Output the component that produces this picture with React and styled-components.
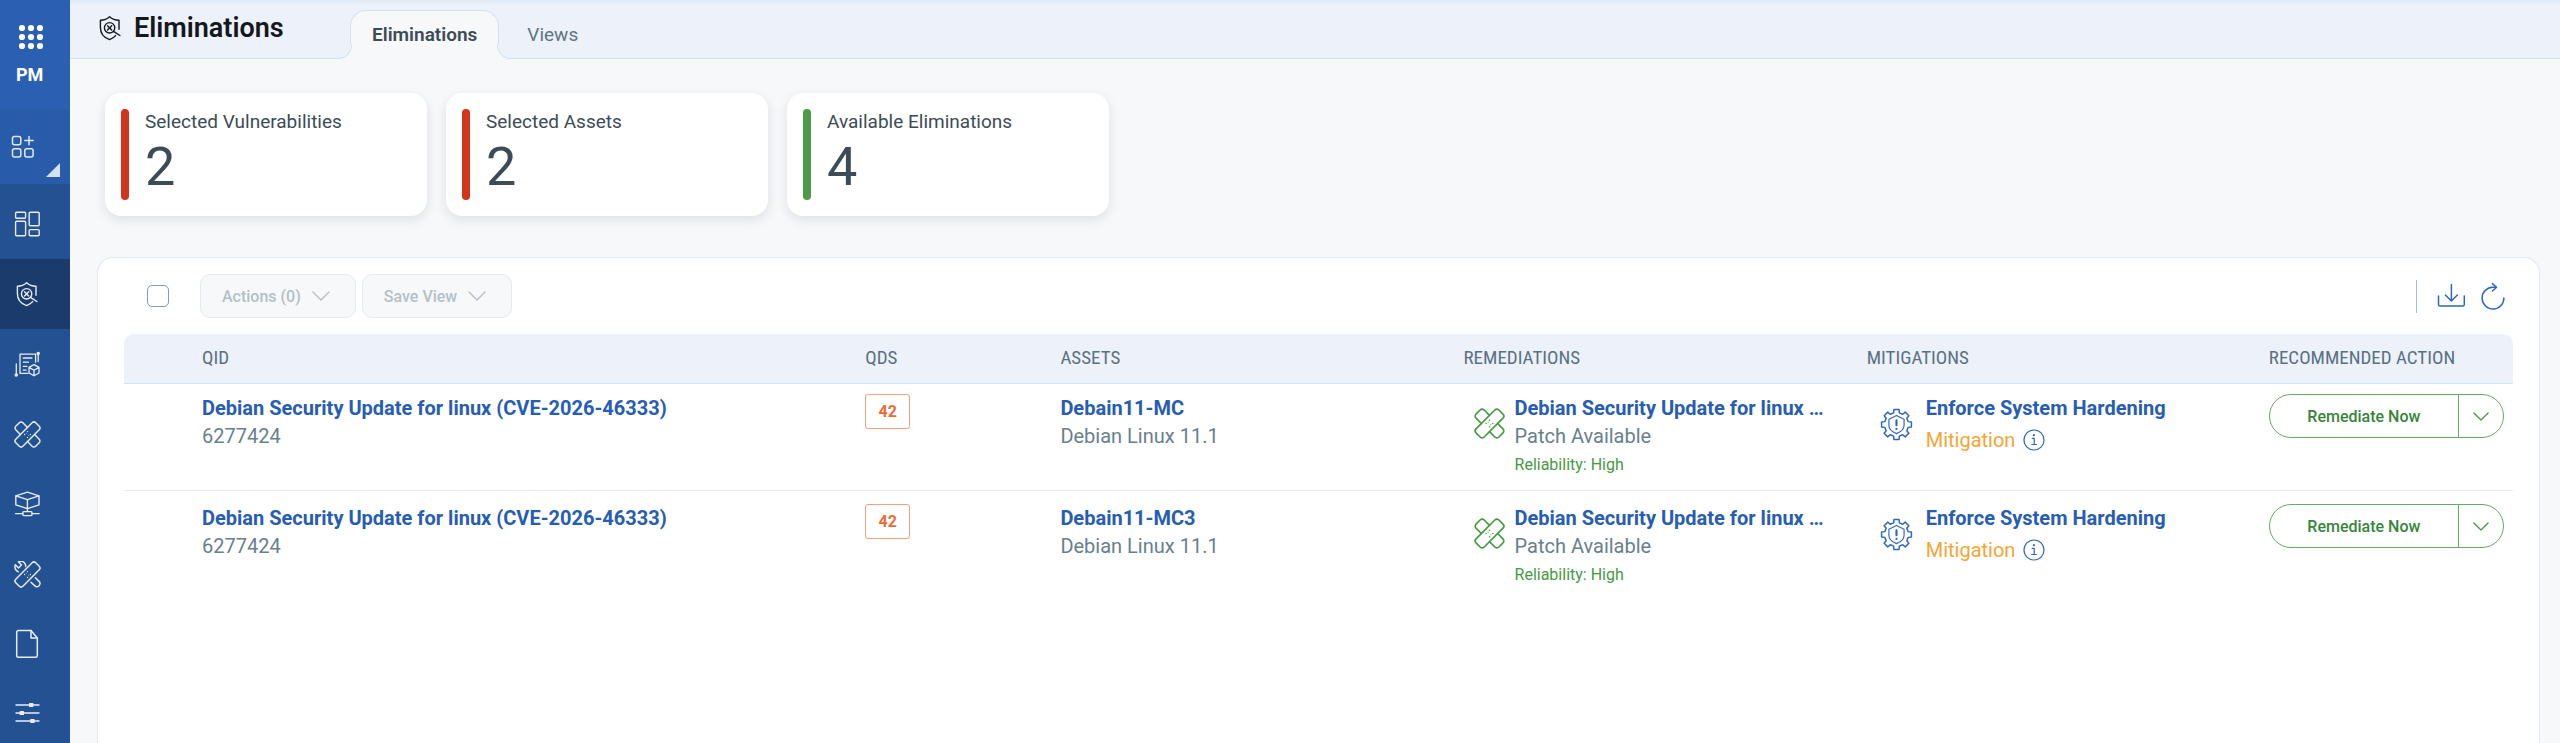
import React from 'react';
import styled, { createGlobalStyle } from 'styled-components';

const GlobalStyle = createGlobalStyle`
  * {
    box-sizing: border-box;
  }

  body {
    margin: 0;
    background: #f6f8fa;
    color: #3d4b56;
    font-family: Roboto, 'Liberation Sans', sans-serif;
    font-size: 20px;
  }

  button {
    font-family: inherit;
    cursor: pointer;
  }
`;

// Shell
const Page = styled.div`
  display: flex;
  min-height: 100vh;
`;

const Sidebar = styled.aside`
  flex: 0 0 70px;
  display: flex;
  flex-direction: column;
  background: #235191;
  color: #fff;
`;

const AppSwitcher = styled.div`
  height: 109px;
  padding: 24px 0 0 16px;
  background: #2b5fb1;
`;

const AppButton = styled.button`
  display: block;
  padding: 0 2px;
  border: none;
  background: none;
  color: inherit;

  svg {
    display: block;
  }
`;

const AppName = styled.div`
  margin-top: 13px;
  font-size: 18px;
  font-weight: 700;
  line-height: 24px;
`;

const QuickAdd = styled.button`
  display: flex;
  justify-content: space-between;
  height: 75px;
  margin-bottom: 5px;
  padding: 26px 10px 7px 11px;
  border: none;
  background: #295bab;
  color: #dfe8f5;
`;

const AddCorner = styled.span`
  align-self: flex-end;
  border-left: 14px solid transparent;
  border-bottom: 14px solid #d5e1f2;
`;

const NavItem = styled.a`
  display: flex;
  align-items: center;
  flex: 0 0 70px;
  padding-left: 14px;
  background: ${({ $active }) => ($active ? '#1a3b6c' : 'transparent')};
  color: #e6edf6;
`;

const Content = styled.div`
  flex: 1;
  min-width: 0;
  display: flex;
  flex-direction: column;
`;

// Header and tabs
const Header = styled.header`
  display: flex;
  height: 59px;
  padding-left: 27px;
  background: linear-gradient(#dfe8f3, #edf2fa 5px);
  border-bottom: 1px solid #d3e2f1;
`;

const Title = styled.h1`
  display: flex;
  align-items: center;
  gap: 11px;
  width: 253px;
  height: 55px;
  margin: 0;
  color: #14181d;
  font-size: 27px;
  font-weight: 600;
`;

const Tabs = styled.nav`
  display: flex;
  align-items: flex-end;
`;

const Tab = styled.a`
  position: relative;
  height: 49px;
  margin-bottom: -1px;
  padding: 0 ${({ $active }) => ($active ? 21 : 27)}px;
  border: 1px solid ${({ $active }) => ($active ? '#d3e2f1' : 'transparent')};
  border-bottom: none;
  border-radius: 16px 16px 0 0;
  background: ${({ $active }) => ($active ? '#f6f8fa' : 'none')};
  color: ${({ $active }) => ($active ? '#3d4b56' : '#5f7482')};
  font-size: 19px;
  font-weight: ${({ $active }) => ($active ? 600 : 400)};
  line-height: 48px;
  text-decoration: none;

  &::before,
  &::after {
    content: ${({ $active }) => ($active ? "''" : 'none')};
    position: absolute;
    bottom: 0;
    width: 14px;
    height: 14px;
    border-bottom: 1px solid #d3e2f1;
    background: #edf2fa;
  }

  &::before {
    right: 100%;
    border-right: 1px solid #d3e2f1;
    border-bottom-right-radius: 14px;
    box-shadow: 4px 4px 0 #f6f8fa;
    clip-path: inset(0 -1px 0 0);
    margin-right: -1px;
  }

  &::after {
    left: 100%;
    border-left: 1px solid #d3e2f1;
    border-bottom-left-radius: 14px;
    box-shadow: -4px 4px 0 #f6f8fa;
    clip-path: inset(0 0 0 -1px);
    margin-left: -1px;
  }
`;

// Summary cards
const Cards = styled.section`
  display: flex;
  gap: 19px;
  padding: 34px 35px 41px;
`;

const Card = styled.div`
  display: flex;
  gap: 16px;
  width: 322px;
  padding: 16px;
  border-radius: 16px;
  background: #fff;
  box-shadow: 0 4px 12px rgba(30, 40, 60, 0.11);
`;

const CardBar = styled.div`
  width: 8px;
  border-radius: 4px;
  background: ${({ $color }) => $color};
`;

const CardLabel = styled.div`
  font-size: 19px;
  line-height: 25px;
`;

const CardValue = styled.div`
  font-size: 54px;
  line-height: 66px;
`;

// Panel and toolbar
const Panel = styled.main`
  flex: 1;
  margin: 0 20px 0 27px;
  padding: 0 26px;
  border: 1px solid #e1e8f0;
  border-bottom: none;
  border-radius: 16px 16px 0 0;
  background: #fff;
`;

const Toolbar = styled.div`
  display: flex;
  align-items: center;
  gap: 6px;
  padding: 16px 7px 16px 23px;
`;

const Checkbox = styled.input`
  appearance: none;
  width: 22px;
  height: 22px;
  margin: 0 25px 0 0;
  border: 1px solid #8b9bab;
  border-radius: 5px;
  background: #fff;
`;

const ToolbarButton = styled.button`
  display: flex;
  align-items: center;
  gap: 11px;
  height: 44px;
  padding: 0 25px 0 21px;
  border: 1px solid #e4eaf0;
  border-radius: 10px;
  background: #f6f8fa;
  color: #b4bfc7;
  font-size: 16px;
  font-weight: 500;
`;

const ToolbarRight = styled.div`
  display: flex;
  align-items: center;
  gap: 14px;
  height: 33px;
  margin-left: auto;
  padding-left: 20px;
  border-left: 1px solid #a9bccb;
`;

const IconButton = styled.button`
  display: flex;
  padding: 0;
  border: none;
  background: none;
  color: #2f66bf;
`;

// Table
const Table = styled.table`
  width: 100%;
  table-layout: fixed;
  border-collapse: separate;
  border-spacing: 0;
`;

const Th = styled.th`
  height: 50px;
  padding: 0 0 2px;
  border-bottom: 1px solid #d3e2f1;
  background: #edf2fa;
  color: #5b7080;
  font-family: 'Roboto Condensed', Roboto, 'Liberation Sans', sans-serif;
  font-size: 19px;
  font-weight: 400;
  text-align: left;

  &:first-child {
    border-top-left-radius: 10px;
  }

  &:last-child {
    border-top-right-radius: 10px;
  }
`;

const Row = styled.tr`
  &:first-child > td {
    padding-top: 10px;
  }

  &:last-child > td {
    border-bottom: none;
  }
`;

const Td = styled.td`
  padding: 13px 0 10px;
  border-bottom: 1px solid #e8ecf0;
  vertical-align: top;
`;

const RowLink = styled.a`
  display: block;
  color: #275db3;
  font-weight: 700;
  line-height: 28px;
  text-decoration: none;
  white-space: nowrap;
`;

const SubText = styled.div`
  color: #68808e;
  line-height: 28px;
`;

const Score = styled.span`
  display: block;
  width: 45px;
  border: 1px solid #f2a080;
  border-radius: 3px;
  color: #ec6b35;
  font-size: 16px;
  font-weight: 700;
  line-height: 33px;
  text-align: center;
`;

const IconCell = styled.div`
  display: flex;
  gap: ${({ $gap }) => $gap}px;
`;

const CellIcon = styled.span`
  flex: none;
  padding: 14px 0 0 ${({ $indent }) => $indent}px;
  color: ${({ $color }) => $color};

  svg {
    display: block;
  }
`;

const Reliability = styled.div`
  color: #459b42;
  font-size: 16px;
  line-height: 30px;
`;

const Mitigation = styled.div`
  display: flex;
  align-items: center;
  gap: 8px;
  color: #f6a535;
  line-height: 36px;
`;

const SplitButton = styled.div`
  display: flex;
  width: 235px;
  height: 44px;
  border: 1px solid #69a966;
  border-radius: 22px;
`;

const SplitMain = styled.button`
  flex: 1;
  padding: 0;
  border: none;
  background: none;
  color: #36863a;
  font-size: 16px;
  font-weight: 500;
`;

const SplitToggle = styled.button`
  display: flex;
  align-items: center;
  justify-content: center;
  width: 45px;
  padding: 0;
  border: none;
  border-left: 1px solid #69a966;
  background: none;
  color: #4a9348;
`;

// Icons
const Svg = ({ w = 26, h = w, box, stroke = 1.3, children }) => (
  <svg
    width={w}
    height={h}
    viewBox={box || `0 0 ${w} ${h}`}
    fill="none"
    stroke="currentColor"
    strokeWidth={stroke}
    strokeLinecap="round"
    strokeLinejoin="round"
    aria-hidden="true"
  >
    {children}
  </svg>
);

const GridDots = () => (
  <Svg w={26}>
    {[4, 13, 22].map((y) =>
      [4, 13, 22].map((x) => (
        <circle key={`${x}-${y}`} cx={x} cy={y} r="3.1" fill="currentColor" stroke="none" />
      ))
    )}
  </Svg>
);

const AddWidgetIcon = () => (
  <Svg w={24} stroke={1.5}>
    <rect x="1.5" y="1.5" width="8.3" height="8.3" rx="2" />
    <rect x="1.5" y="13.8" width="8.3" height="8.3" rx="2" />
    <rect x="13.8" y="13.8" width="8.3" height="8.3" rx="2" />
    <path d="M18 1.5v8.3M13.8 5.6h8.3" />
  </Svg>
);

const DashboardIcon = () => (
  <Svg stroke={1.4}>
    <rect x="1.6" y="1.2" width="10" height="6" rx="1" />
    <rect x="1.6" y="10.2" width="10" height="14.6" rx="1" />
    <rect x="15.2" y="1.2" width="10" height="13.6" rx="1" />
    <rect x="15.2" y="18.6" width="10" height="6.2" rx="1" />
  </Svg>
);

const ShieldIcon = () => (
  <Svg stroke={1.4}>
    <path d="M22 14.3V5.2C18.3 5.2 15 4 12.6 1.7 10.2 4 6.9 5.2 3.4 5.2v7.2c0 6 3.7 10.2 9.2 12.2 2.3-.8 4.5-2.2 6-4" />
    <circle cx="12.6" cy="12.8" r="5.2" />
    <path d="M10.5 10.7l4.2 4.2M14.7 10.7l-4.2 4.2M16.5 16.4l6.4 4.1" />
  </Svg>
);

const ReportIcon = () => (
  <Svg>
    <path d="M14 22.4H6V3.2h15.6v8M9.3 7h8.6M9.3 11.2h5.2M9.3 15.4h3.6M9.3 19.2h2.8" />
    <path d="M2.3 13v10.4M24.2 2.6v8" />
    <circle cx="2.3" cy="24" r="1.1" fill="currentColor" />
    <circle cx="24.2" cy="2.4" r="1.1" fill="currentColor" />
    <path d="M20 13.6l5 2.8v5.6l-5 2.8-5-2.8v-5.6zM15 16.4l5 2.8 5-2.8M20 19.2v5.6" />
  </Svg>
);

const PatchDots = () => (
  <g fill="currentColor" stroke="none">
    <circle cx="0" cy="-3" r=".7" />
    <circle cx="0" cy="3" r=".7" />
    <circle cx="-3" cy="0" r=".7" />
    <circle cx="3" cy="0" r=".7" />
    <circle cx="-1.2" cy="-1.2" r=".5" />
    <circle cx="1.2" cy="1.2" r=".5" />
  </g>
);

const BandageIcon = ({ size = 27 }) => (
  <Svg w={size} box="-14 -14 28 28" stroke={1.5}>
    <rect x="-14.6" y="-5.2" width="29.2" height="10.4" rx="2.6" transform="rotate(-45)" />
    <g transform="rotate(45)">
      <path d="M-5.2-5.2H-12a2.6 2.6 0 0 0-2.6 2.6v5.2A2.6 2.6 0 0 0-12 5.2h6.8" />
      <path d="M5.2-5.2H12a2.6 2.6 0 0 1 2.6 2.6v5.2A2.6 2.6 0 0 1 12 5.2H5.2" />
    </g>
    <PatchDots />
  </Svg>
);

const NetworkBoxIcon = () => (
  <Svg stroke={1.4}>
    <path d="M13.4 1.2l11.6 3.6v9l-11.6 3.8L1.8 13.8v-9zM1.8 4.8l11.6 3.8L25 4.8M13.4 8.6v12" />
    <rect x="8.8" y="20.6" width="9.2" height="4" rx="1" />
    <path d="M1.5 22.6h7.3M18 22.6h7.2" />
  </Svg>
);

const RepairIcon = () => (
  <Svg w={27} box="-14 -14 28 28" stroke={1.5}>
    <rect x="-14.6" y="-5.2" width="29.2" height="10.4" rx="2.6" transform="rotate(-45)" />
    <path d="M-9.5-2.8c-3-1.4-4-4.3-3.2-7.4l3.4 3.4 3-3-3.2-3.3c2.8-1 5.9-.2 7.2 2.4.4.8.5 1.6.4 2.4" />
    <path d="M8.2 3.4l4 4c2.7 2.8-1.8 7-4.6 4.4L3.6 8" />
    <PatchDots />
  </Svg>
);

const FileIcon = () => (
  <Svg w={26} h={30} stroke={1.5}>
    <path d="M17 1.6H4.2a1.5 1.5 0 0 0-1.5 1.5v23.6a1.5 1.5 0 0 0 1.5 1.5h17.6a1.5 1.5 0 0 0 1.5-1.5V9z" />
    <path d="M17 1.6V9h6.3" />
  </Svg>
);

const SlidersIcon = () => (
  <Svg stroke={1.4}>
    <path d="M2 4h23M2 12h23M2 20h23" />
    <g fill="currentColor" stroke="none">
      <rect x="15" y="2" width="4.4" height="4" rx=".5" />
      <rect x="5.6" y="10" width="4.4" height="4" rx=".5" />
      <rect x="16.2" y="18" width="4.4" height="4" rx=".5" />
    </g>
  </Svg>
);

const ChevronIcon = ({ w = 18, h = 10 }) => (
  <Svg w={w} h={h} box="0 0 18 10" stroke={1.4}>
    <path d="M1 1l8 8 8-8" />
  </Svg>
);

const DownloadIcon = () => (
  <Svg w={29} h={26} stroke={1.5}>
    <path d="M1.5 13v8.4a1.6 1.6 0 0 0 1.6 1.6h22.6a1.6 1.6 0 0 0 1.6-1.6V13M14.4 1.5v16M8.4 12l6 6 6-6" />
  </Svg>
);

const RefreshIcon = () => (
  <Svg w={26} h={28} stroke={1.5}>
    <path d="M23.9 16A10.9 10.9 0 1 1 12.4 5.2h3.8M12.4 1.6l4.2 3.6-4.2 3.8" />
  </Svg>
);

const gearPoints = Array.from({ length: 8 }, (_, i) =>
  [
    [-0.24, 12.4],
    [-0.17, 15.6],
    [0.17, 15.6],
    [0.24, 12.4],
  ].map(([offset, r]) => {
    const angle = (i * Math.PI) / 4 + offset;
    return `${(r * Math.cos(angle)).toFixed(2)} ${(r * Math.sin(angle)).toFixed(2)}`;
  })
).flat();

const GearIcon = () => (
  <Svg w={33} box="-17 -17 34 34" stroke={1.5}>
    <path d={`M${gearPoints.join('L')}Z`} />
    <path d="M0-9.2l7.8 3.8v6.4C7.8 5 4 7.8 0 9.4-4 7.8-7.8 5-7.8 1v-6.4z" strokeWidth="1.2" />
    <path d="M0-4.4v5.2M0 4.4v.2" strokeWidth="2.2" />
  </Svg>
);

const InfoIcon = () => (
  <Svg w={22} stroke={1.2}>
    <circle cx="11" cy="11" r="10" />
    <path d="M9.2 9.3h2v6.2M8.8 15.5h4.6" />
    <circle cx="10.9" cy="6.2" r="1.1" fill="currentColor" stroke="none" />
  </Svg>
);

const navItems = [
  { label: 'Dashboard', icon: <DashboardIcon /> },
  { label: 'Eliminations', icon: <ShieldIcon />, active: true },
  { label: 'Reports', icon: <ReportIcon /> },
  { label: 'Patches', icon: <BandageIcon /> },
  { label: 'Assets', icon: <NetworkBoxIcon /> },
  { label: 'Jobs', icon: <RepairIcon /> },
  { label: 'Documents', icon: <FileIcon /> },
  { label: 'Configuration', icon: <SlidersIcon /> },
];

const cards = [
  { label: 'Selected Vulnerabilities', value: 2, color: '#d2341c' },
  { label: 'Selected Assets', value: 2, color: '#d2341c' },
  { label: 'Available Eliminations', value: 4, color: '#4d9b48' },
];

const columns = [
  { label: '', width: 78 },
  { label: 'QID', width: 663 },
  { label: 'QDS', width: 195 },
  { label: 'ASSETS', width: 403 },
  { label: 'REMEDIATIONS', width: 403 },
  { label: 'MITIGATIONS', width: 402 },
  { label: 'RECOMMENDED ACTION', width: 244 },
];

const rows = [
  { qid: '6277424', score: 42, asset: 'Debain11-MC' },
  { qid: '6277424', score: 42, asset: 'Debain11-MC3' },
];

function App() {
  return (
    <Page>
      <GlobalStyle />
      <Sidebar>
        <AppSwitcher>
          <AppButton aria-label="Switch application">
            <GridDots />
          </AppButton>
          <AppName>PM</AppName>
        </AppSwitcher>
        <QuickAdd aria-label="Add">
          <AddWidgetIcon />
          <AddCorner />
        </QuickAdd>
        {navItems.map((item) => (
          <NavItem key={item.label} href="#" aria-label={item.label} $active={item.active}>
            {item.icon}
          </NavItem>
        ))}
      </Sidebar>

      <Content>
        <Header>
          <Title>
            <ShieldIcon />
            Eliminations
          </Title>
          <Tabs>
            <Tab href="#" $active>Eliminations</Tab>
            <Tab href="#">Views</Tab>
          </Tabs>
        </Header>

        <Cards>
          {cards.map((card) => (
            <Card key={card.label}>
              <CardBar $color={card.color} />
              <div>
                <CardLabel>{card.label}</CardLabel>
                <CardValue>{card.value}</CardValue>
              </div>
            </Card>
          ))}
        </Cards>

        <Panel>
          <Toolbar>
            <Checkbox type="checkbox" aria-label="Select all" />
            <ToolbarButton disabled>
              Actions (0)
              <ChevronIcon />
            </ToolbarButton>
            <ToolbarButton disabled>
              Save View
              <ChevronIcon />
            </ToolbarButton>
            <ToolbarRight>
              <IconButton aria-label="Download">
                <DownloadIcon />
              </IconButton>
              <IconButton aria-label="Refresh">
                <RefreshIcon />
              </IconButton>
            </ToolbarRight>
          </Toolbar>

          <Table>
            <colgroup>
              {columns.map((col) => (
                <col key={col.label} width={col.width} />
              ))}
            </colgroup>
            <thead>
              <tr>
                {columns.map((col) => (
                  <Th key={col.label}>{col.label}</Th>
                ))}
              </tr>
            </thead>
            <tbody>
              {rows.map((row) => (
                <Row key={row.asset}>
                  <Td />
                  <Td>
                    <RowLink href="#">Debian Security Update for linux (CVE-2026-46333)</RowLink>
                    <SubText>{row.qid}</SubText>
                  </Td>
                  <Td>
                    <Score>{row.score}</Score>
                  </Td>
                  <Td>
                    <RowLink href="#">{row.asset}</RowLink>
                    <SubText>Debian Linux 11.1</SubText>
                  </Td>
                  <Td>
                    <IconCell $gap={10}>
                      <CellIcon $indent={10} $color="#459b42">
                        <BandageIcon size={31} />
                      </CellIcon>
                      <div>
                        <RowLink href="#">Debian Security Update for linux …</RowLink>
                        <SubText>Patch Available</SubText>
                        <Reliability>Reliability: High</Reliability>
                      </div>
                    </IconCell>
                  </Td>
                  <Td>
                    <IconCell $gap={13}>
                      <CellIcon $indent={13} $color="#2f66bf">
                        <GearIcon />
                      </CellIcon>
                      <div>
                        <RowLink href="#">Enforce System Hardening</RowLink>
                        <Mitigation>
                          Mitigation
                          <IconButton aria-label="Mitigation details">
                            <InfoIcon />
                          </IconButton>
                        </Mitigation>
                      </div>
                    </IconCell>
                  </Td>
                  <Td>
                    <SplitButton>
                      <SplitMain>Remediate Now</SplitMain>
                      <SplitToggle aria-label="More actions">
                        <ChevronIcon w={16} h={9} />
                      </SplitToggle>
                    </SplitButton>
                  </Td>
                </Row>
              ))}
            </tbody>
          </Table>
        </Panel>
      </Content>
    </Page>
  );
}

export default App;
